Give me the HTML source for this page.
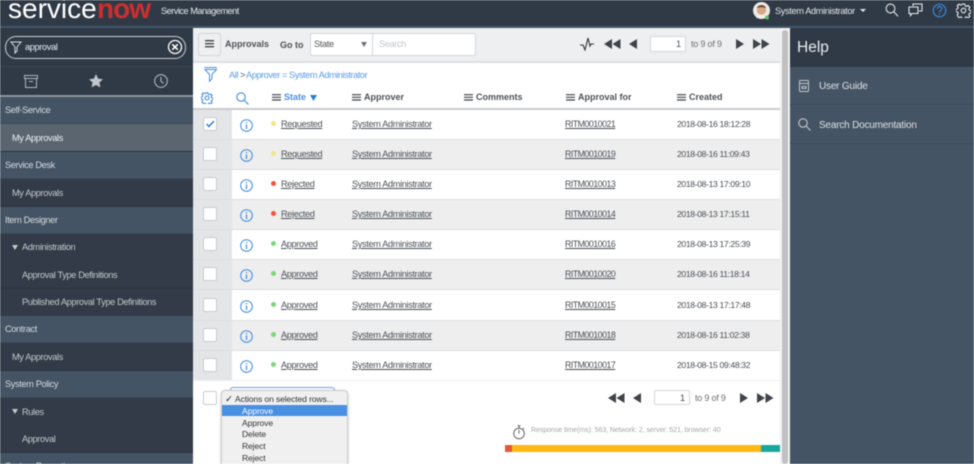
<!DOCTYPE html>
<html><head><meta charset="utf-8">
<style>
html,body{margin:0;padding:0;background:#fff}
#p{position:relative;width:974px;height:464px;overflow:hidden;background:#fff;font-family:"Liberation Sans",sans-serif;font-size:9.2px;letter-spacing:-.35px;color:#4a4f55;filter:blur(.4px)}
#p div,#p svg{position:absolute}
.t{position:absolute;white-space:nowrap;line-height:12px}
.u{text-decoration:underline}
.d{font-size:8.6px}
.r{font-size:8.8px;letter-spacing:-.5px}
.h{background:#455464;left:0;width:193px;height:27px;border-bottom:1px solid #3c4958;box-sizing:border-box}
.s{background:#323b47;left:0;width:193px;height:28px;border-bottom:1px solid #2b333d;box-sizing:border-box}
.n{color:#d5dade}
.g{color:#c3c8cd}
.cb{left:203px;width:12px;height:12px;background:#fff;border:1px solid #c9cbce;border-radius:2px;margin-top:-1px}
.hd{font-weight:bold;font-size:9px;letter-spacing:0;color:#4d5257}
.m{font-size:8.5px;letter-spacing:-.1px;color:#333}
.w{font-size:9px;letter-spacing:-.2px;color:#6a6f75}
.l{color:#dde0e3;font-size:10px;letter-spacing:-.2px}
</style></head><body>
<div id="p">
<!-- top bar -->
<div style="left:0;top:0;width:974px;height:26px;background:#303a46"></div>
<div style="left:0;top:26px;width:974px;height:2px;background:#42566a"></div>
<span class="t" style="left:8px;top:-8px;font-size:28px;line-height:34px;color:#fff;letter-spacing:0">service</span>
<span class="t" style="left:97px;top:-8px;font-size:28px;line-height:34px;color:#cf2e2e;font-weight:bold;letter-spacing:-1px">now</span>
<span class="t" style="left:161px;top:5px;color:#e4e7ea;letter-spacing:-.5px">Service Management</span>
<svg style="left:753px;top:2px" width="18" height="18" viewBox="0 0 18 18"><circle cx="8.5" cy="8.5" r="8.5" fill="#efe9e2"/><circle cx="8.5" cy="8" r="4.6" fill="#d9a586"/><path d="M4 6c1-4 8-4 9 0l-1 0c-2-1-5-1-7 0z" fill="#6b5038"/><path d="M3 16c2-3 9-3 11 0z" fill="#f3f3f3"/><circle cx="14" cy="15.500" r="2" fill="#5cc16a"/></svg>
<span class="t" style="left:775px;top:5px;color:#e4e7ea">System Administrator</span>
<svg style="left:860px;top:9px" width="6" height="4"><path d="M0 0h6L3 3z" fill="#e4e7ea"/></svg>
<svg style="left:885px;top:3px" width="14" height="15" fill="none" stroke="#e4e7ea" stroke-width="1.100"><circle cx="5.500" cy="5.500" r="4.400"/><path d="M8.800 8.800l4.200 4.500"/></svg>
<svg style="left:908px;top:3px" width="16" height="14" fill="none" stroke="#e4e7ea" stroke-width="1.100"><path d="M5 3V1h9v7h-3"/><path d="M1 4h9v6.500H4l-1.500 2v-2H1z" fill="#303a46"/></svg>
<svg style="left:932px;top:3px" width="15" height="15" fill="none"><circle cx="7.500" cy="7.500" r="6.300" stroke="#3c86d8" stroke-width="1.200"/><path d="M5.300 5.800c0-3 4.500-3 4.500-.2 0 1.700-2.200 1.700-2.200 3.500" stroke="#3c86d8" stroke-width="1.200"/><circle cx="7.600" cy="11" r=".8" fill="#3c86d8"/></svg>
<svg style="left:956px;top:3px" width="15" height="15" viewBox="0 0 15 15" fill="none" stroke="#e4e7ea" stroke-width="1.100"><circle cx="7.500" cy="7.500" r="2.300"/><path d="M6.300 1h2.400l.4 1.900 1.300.6 1.700-1 1.700 1.700-1 1.700.6 1.300 1.600.4v2.400l-1.600.4-.6 1.300 1 1.700-1.700 1.500-1.700-1-1.300.6-.4 1.500H6.300l-.4-1.500-1.300-.6-1.700 1L1.200 12l1-1.700-.6-1.300L0 8.600V6.200l1.600-.4.600-1.300-1-1.700 1.700-1.700 1.700 1 1.300-.6z"/></svg>

<!-- sidebar -->
<div style="left:0;top:28px;width:193px;height:436px;background:#303a46"></div>
<div style="left:5px;top:36px;width:179px;height:21px;border:1px solid #c9ced3;border-radius:11px"></div>
<svg style="left:10px;top:41px" width="12" height="13" fill="none" stroke="#d9dde0" stroke-width="1"><path d="M1 1h10L7 6v4l-2 2V6z"/></svg>
<span class="t" style="left:25px;top:41px;color:#e8ebed">approval</span>
<svg style="left:167px;top:39px" width="16" height="16" fill="none" stroke="#fff" stroke-width="1.300"><circle cx="8" cy="8" r="6.500"/><path d="M5.300 5.300l5.400 5.400M10.700 5.300l-5.400 5.400" stroke-width="1.600"/></svg>
<div style="left:0;top:66px;width:193px;height:1px;background:#3a4552"></div>
<svg style="left:24px;top:75px" width="14" height="13" fill="none" stroke="#aeb4ba" stroke-width="1"><path d="M.5.500h13v3H.500zM1.500 3.500v9h11v-9M5 6.500h4"/></svg>
<svg style="left:89px;top:74px" width="14" height="14"><path d="M7 0l2.100 4.600 4.900.6-3.600 3.300 1 4.900L7 11l-4.400 2.400 1-4.900L0 5.200l4.900-.6z" fill="#c0c5ca"/></svg>
<svg style="left:154px;top:74px" width="14" height="14" fill="none" stroke="#aeb4ba" stroke-width="1.100"><circle cx="7" cy="7" r="6.300"/><path d="M7 3v4.300l2.500 2"/></svg>
<div style="left:0;top:95px;width:193px;height:2px;background:#8b939b"></div>

<div class="h" style="top:97px"></div><span class="t n" style="left:5px;top:104px">Self-Service</span>
<div class="s" style="top:124px;background:#5a656f"></div><span class="t n" style="left:12px;top:132px;color:#eef0f2">My Approvals</span>
<div class="h" style="top:152px"></div><span class="t n" style="left:5px;top:159px">Service Desk</span>
<div class="s" style="top:179px"></div><span class="t n g" style="left:12px;top:187px">My Approvals</span>
<div class="h" style="top:207px"></div><span class="t n" style="left:5px;top:214px">Item Designer</span>
<div class="s" style="top:234px"></div><svg style="left:12px;top:245px" width="6" height="5"><path d="M0 0h6L3 5z" fill="#c3c8cd"/></svg><span class="t n g" style="left:22px;top:241px">Administration</span>
<div class="s" style="top:261px"></div><span class="t n g" style="left:22px;top:269px">Approval Type Definitions</span>
<div class="s" style="top:289px"></div><span class="t n g" style="left:22px;top:296px">Published Approval Type Definitions</span>
<div class="h" style="top:316px"></div><span class="t n" style="left:5px;top:323px">Contract</span>
<div class="s" style="top:343px"></div><span class="t n g" style="left:12px;top:351px">My Approvals</span>
<div class="h" style="top:371px"></div><span class="t n" style="left:5px;top:378px">System Policy</span>
<div class="s" style="top:398px"></div><svg style="left:12px;top:409px" width="6" height="5"><path d="M0 0h6L3 5z" fill="#c3c8cd"/></svg><span class="t n g" style="left:22px;top:406px">Rules</span>
<div class="s" style="top:425px"></div><span class="t n g" style="left:22px;top:433px">Approval</span>
<div class="h" style="top:453px"></div><span class="t n" style="left:5px;top:460px">System Properties</span>

<!-- main toolbar -->
<div style="left:193px;top:28px;width:587px;height:33px;background:#eeeff0;border-bottom:2px solid #dcdee0"></div>
<div style="left:198px;top:33px;width:21px;height:21px;background:#eeeff0;border:1px solid #d4d6d8;border-radius:2px"></div>
<svg style="left:205px;top:40px" width="9" height="8"><path d="M0 .7h9M0 3.700h9M0 6.700h9" stroke="#3f444a" stroke-width="1.300"/></svg>
<span class="t hd" style="left:225px;top:38px">Approvals</span>
<span class="t hd" style="left:280px;top:39px">Go to</span>
<div style="left:310px;top:33px;width:164px;height:21px;background:#fff;border:1px solid #d4d6d8;border-radius:2px"></div>
<div style="left:372px;top:34px;width:1px;height:21px;background:#d4d6d8"></div>
<span class="t" style="left:314px;top:38px;color:#555">State</span>
<svg style="left:361px;top:42px" width="6" height="5"><path d="M0 0h6L3 5z" fill="#6b7076"/></svg>
<span class="t" style="left:379px;top:38px;color:#c3c6c9">Search</span>

<svg style="left:580px;top:37px" width="15" height="14" fill="none" stroke="#33383e" stroke-width="1.100"><path d="M0 8h3l2 5 3-12 2 8 1-2h3"/></svg>
<svg style="left:604px;top:39px" width="17" height="10" fill="#3f444a"><path d="M8 0v10L0 5zM16.500 0v10L8.500 5z"/></svg>
<svg style="left:629px;top:39px" width="8" height="10" fill="#3f444a"><path d="M8 0v10L0 5z"/></svg>
<div style="left:650px;top:36px;width:34px;height:14px;background:#fff;border:1px solid #d4d6d8;border-radius:2px"></div>
<span class="t" style="left:676px;top:38px">1</span>
<span class="t w" style="left:691px;top:38px">to 9 of 9</span>
<svg style="left:736px;top:39px" width="8" height="10" fill="#3f444a"><path d="M0 0v10l8-5z"/></svg>
<svg style="left:753px;top:39px" width="17" height="10" fill="#3f444a"><path d="M0 0v10l8-5zM8.500 0v10l8-5z"/></svg>

<!-- breadcrumb -->
<svg style="left:204px;top:67px" width="14" height="15" fill="none" stroke="#4a90e2" stroke-width="1"><path d="M.5.500h12.500M1 2.500h11.500L8 7.500v4l-2.500 3V7.500z"/></svg>
<span class="t" style="left:229px;top:69px;color:#5a9bea">All</span>
<span class="t" style="left:240px;top:69px;color:#555">&gt;</span>
<span class="t" style="left:246px;top:69px;color:#5a9bea;letter-spacing:-.43px">Approver = System Administrator</span>

<!-- header row -->
<svg style="left:201px;top:92px" width="12" height="12" viewBox="0 0 15 15" fill="none" stroke="#3f8ae0" stroke-width="1.300"><circle cx="7.500" cy="7.500" r="2.500"/><path d="M6.300 1h2.400l.4 1.900 1.300.6 1.700-1 1.700 1.700-1 1.700.6 1.300 1.600.4v2.400l-1.600.4-.6 1.300 1 1.700-1.700 1.500-1.700-1-1.300.6-.4 1.500H6.300l-.4-1.500-1.300-.6-1.700 1L1.200 12l1-1.700-.6-1.300L0 8.600V6.200l1.600-.4.600-1.300-1-1.700 1.700-1.700 1.700 1 1.300-.6z"/></svg>
<svg style="left:236px;top:92px" width="13" height="13" fill="none" stroke="#3f8ae0" stroke-width="1.100"><circle cx="5" cy="5" r="4.200"/><path d="M8 8l4.500 4.500"/></svg>
<svg style="left:272px;top:94px" width="9" height="7"><path d="M0 .7h9M0 3.300h9M0 6h9" stroke="#3f444a" stroke-width="1.200"/></svg>
<span class="t hd" style="left:284px;top:91px;color:#4a90e2">State</span>
<svg style="left:310px;top:95px" width="7" height="6"><path d="M0 0h7L3.500 6z" fill="#2b7ad6"/></svg>
<svg style="left:352px;top:94px" width="9" height="7"><path d="M0 .7h9M0 3.300h9M0 6h9" stroke="#3f444a" stroke-width="1.200"/></svg>
<span class="t hd" style="left:364px;top:91px">Approver</span>
<svg style="left:464px;top:94px" width="9" height="7"><path d="M0 .7h9M0 3.300h9M0 6h9" stroke="#3f444a" stroke-width="1.200"/></svg>
<span class="t hd" style="left:476px;top:91px">Comments</span>
<svg style="left:566px;top:94px" width="9" height="7"><path d="M0 .7h9M0 3.300h9M0 6h9" stroke="#3f444a" stroke-width="1.200"/></svg>
<span class="t hd" style="left:578px;top:91px">Approval for</span>
<svg style="left:677px;top:94px" width="9" height="7"><path d="M0 .7h9M0 3.300h9M0 6h9" stroke="#3f444a" stroke-width="1.200"/></svg>
<span class="t hd" style="left:689px;top:91px">Created</span>
<div style="left:193px;top:108px;width:587px;height:2px;background:#c9ccd0"></div>

<!-- rows backgrounds -->
<div style="left:193px;top:139px;width:587px;height:30px;background:#eeeeee"></div>
<div style="left:193px;top:199px;width:587px;height:30px;background:#eeeeee"></div>
<div style="left:193px;top:259px;width:587px;height:30px;background:#eeeeee"></div>
<div style="left:193px;top:320px;width:587px;height:30px;background:#eeeeee"></div>
<div style="left:193px;top:110px;width:39px;height:270px;background:#e4e5e7"></div>
<div style="left:193px;top:139px;width:587px;height:1px;background:#dddfe1"></div>
<div style="left:193px;top:169px;width:587px;height:1px;background:#dddfe1"></div>
<div style="left:193px;top:199px;width:587px;height:1px;background:#dddfe1"></div>
<div style="left:193px;top:229px;width:587px;height:1px;background:#dddfe1"></div>
<div style="left:193px;top:259px;width:587px;height:1px;background:#dddfe1"></div>
<div style="left:193px;top:289px;width:587px;height:1px;background:#dddfe1"></div>
<div style="left:193px;top:320px;width:587px;height:1px;background:#dddfe1"></div>
<div style="left:193px;top:350px;width:587px;height:1px;background:#dddfe1"></div>
<div style="left:193px;top:380px;width:587px;height:1px;background:#eeeeee"></div>

<!-- row 1 -->
<div class="cb" style="top:118px"></div><svg style="left:206px;top:120px" width="9" height="8" fill="none" stroke="#2b7ad6" stroke-width="1.400"><path d="M.5 4l2.500 2.500 5-5.500"/></svg>
<svg style="left:240px;top:119px" width="13" height="13" fill="none" stroke="#3f8ae0"><circle cx="6.500" cy="6.500" r="5.800"/><path d="M6.500 5.500v4.500" stroke-width="1.200"/><path d="M6.500 3v1.300" stroke-width="1.200"/></svg>
<div style="left:271px;top:121px;width:5px;height:5px;border-radius:50%;background:#f3e58a"></div>
<span class="t u" style="left:281px;top:118px">Requested</span><span class="t u" style="left:352px;top:118px">System Administrator</span><span class="t u r" style="left:565px;top:118px">RITM0010021</span><span class="t d" style="left:677px;top:118px">2018-08-16 18:12:28</span>
<!-- row 2 -->
<div class="cb" style="top:148px"></div>
<svg style="left:240px;top:149px" width="13" height="13" fill="none" stroke="#3f8ae0"><circle cx="6.500" cy="6.500" r="5.800"/><path d="M6.500 5.500v4.500" stroke-width="1.200"/><path d="M6.500 3v1.300" stroke-width="1.200"/></svg>
<div style="left:271px;top:151px;width:5px;height:5px;border-radius:50%;background:#f3e58a"></div>
<span class="t u" style="left:281px;top:148px">Requested</span><span class="t u" style="left:352px;top:148px">System Administrator</span><span class="t u r" style="left:565px;top:148px">RITM0010019</span><span class="t d" style="left:677px;top:148px">2018-08-16 11:09:43</span>
<!-- row 3 -->
<div class="cb" style="top:178px"></div>
<svg style="left:240px;top:179px" width="13" height="13" fill="none" stroke="#3f8ae0"><circle cx="6.500" cy="6.500" r="5.800"/><path d="M6.500 5.500v4.500" stroke-width="1.200"/><path d="M6.500 3v1.300" stroke-width="1.200"/></svg>
<div style="left:271px;top:181px;width:5px;height:5px;border-radius:50%;background:#f4553f"></div>
<span class="t u" style="left:281px;top:178px">Rejected</span><span class="t u" style="left:352px;top:178px">System Administrator</span><span class="t u r" style="left:565px;top:178px">RITM0010013</span><span class="t d" style="left:677px;top:178px">2018-08-13 17:09:10</span>
<!-- row 4 -->
<div class="cb" style="top:208px"></div>
<svg style="left:240px;top:209px" width="13" height="13" fill="none" stroke="#3f8ae0"><circle cx="6.500" cy="6.500" r="5.800"/><path d="M6.500 5.500v4.500" stroke-width="1.200"/><path d="M6.500 3v1.300" stroke-width="1.200"/></svg>
<div style="left:271px;top:211px;width:5px;height:5px;border-radius:50%;background:#f4553f"></div>
<span class="t u" style="left:281px;top:208px">Rejected</span><span class="t u" style="left:352px;top:208px">System Administrator</span><span class="t u r" style="left:565px;top:208px">RITM0010014</span><span class="t d" style="left:677px;top:208px">2018-08-13 17:15:11</span>
<!-- row 5 -->
<div class="cb" style="top:238px"></div>
<svg style="left:240px;top:239px" width="13" height="13" fill="none" stroke="#3f8ae0"><circle cx="6.500" cy="6.500" r="5.800"/><path d="M6.500 5.500v4.500" stroke-width="1.200"/><path d="M6.500 3v1.300" stroke-width="1.200"/></svg>
<div style="left:271px;top:241px;width:5px;height:5px;border-radius:50%;background:#7ed67e"></div>
<span class="t u" style="left:281px;top:238px">Approved</span><span class="t u" style="left:352px;top:238px">System Administrator</span><span class="t u r" style="left:565px;top:238px">RITM0010016</span><span class="t d" style="left:677px;top:238px">2018-08-13 17:25:39</span>
<!-- row 6 -->
<div class="cb" style="top:268px"></div>
<svg style="left:240px;top:269px" width="13" height="13" fill="none" stroke="#3f8ae0"><circle cx="6.500" cy="6.500" r="5.800"/><path d="M6.500 5.500v4.500" stroke-width="1.200"/><path d="M6.500 3v1.300" stroke-width="1.200"/></svg>
<div style="left:271px;top:271px;width:5px;height:5px;border-radius:50%;background:#7ed67e"></div>
<span class="t u" style="left:281px;top:268px">Approved</span><span class="t u" style="left:352px;top:268px">System Administrator</span><span class="t u r" style="left:565px;top:268px">RITM0010020</span><span class="t d" style="left:677px;top:268px">2018-08-16 11:18:14</span>
<!-- row 7 -->
<div class="cb" style="top:299px"></div>
<svg style="left:240px;top:300px" width="13" height="13" fill="none" stroke="#3f8ae0"><circle cx="6.500" cy="6.500" r="5.800"/><path d="M6.500 5.500v4.500" stroke-width="1.200"/><path d="M6.500 3v1.300" stroke-width="1.200"/></svg>
<div style="left:271px;top:302px;width:5px;height:5px;border-radius:50%;background:#7ed67e"></div>
<span class="t u" style="left:281px;top:299px">Approved</span><span class="t u" style="left:352px;top:299px">System Administrator</span><span class="t u r" style="left:565px;top:299px">RITM0010015</span><span class="t d" style="left:677px;top:299px">2018-08-13 17:17:48</span>
<!-- row 8 -->
<div class="cb" style="top:329px"></div>
<svg style="left:240px;top:330px" width="13" height="13" fill="none" stroke="#3f8ae0"><circle cx="6.500" cy="6.500" r="5.800"/><path d="M6.500 5.500v4.500" stroke-width="1.200"/><path d="M6.500 3v1.300" stroke-width="1.200"/></svg>
<div style="left:271px;top:332px;width:5px;height:5px;border-radius:50%;background:#7ed67e"></div>
<span class="t u" style="left:281px;top:329px">Approved</span><span class="t u" style="left:352px;top:329px">System Administrator</span><span class="t u r" style="left:565px;top:329px">RITM0010018</span><span class="t d" style="left:677px;top:329px">2018-08-16 11:02:38</span>
<!-- row 9 -->
<div class="cb" style="top:359px"></div>
<svg style="left:240px;top:360px" width="13" height="13" fill="none" stroke="#3f8ae0"><circle cx="6.500" cy="6.500" r="5.800"/><path d="M6.500 5.500v4.500" stroke-width="1.200"/><path d="M6.500 3v1.300" stroke-width="1.200"/></svg>
<div style="left:271px;top:362px;width:5px;height:5px;border-radius:50%;background:#7ed67e"></div>
<span class="t u" style="left:281px;top:359px">Approved</span><span class="t u" style="left:352px;top:359px">System Administrator</span><span class="t u r" style="left:565px;top:359px">RITM0010017</span><span class="t d" style="left:677px;top:359px">2018-08-15 09:48:32</span>

<!-- footer actions -->
<div class="cb" style="top:391px;margin-top:0"></div>
<div style="left:230px;top:387px;width:103px;height:6px;border:1px solid #6aa5e8;border-radius:3px;background:#fff"></div>
<div style="left:221px;top:390px;width:127px;height:80px;background:#f0f0f0;border:1px solid #c9c9c9;border-radius:4px;box-sizing:border-box;box-shadow:0 1px 3px rgba(0,0,0,.2)"></div>
<div style="left:222px;top:405px;width:125px;height:11px;background:#4a90e2"></div>
<span class="t" style="left:225px;top:393px;color:#222;font-size:9.300px;letter-spacing:0">&#10003;</span>
<span class="t m" style="left:235px;top:393px">Actions on selected rows...</span>
<span class="t m" style="left:242px;top:405px;color:#fff">Approve</span>
<span class="t m" style="left:242px;top:417px">Approve</span>
<span class="t m" style="left:242px;top:428px">Delete</span>
<span class="t m" style="left:242px;top:440px">Reject</span>
<span class="t m" style="left:242px;top:452px">Reject</span>

<!-- footer pagination -->
<svg style="left:608px;top:393px" width="17" height="10" fill="#3f444a"><path d="M8 0v10L0 5zM16.500 0v10L8.500 5z"/></svg>
<svg style="left:633px;top:393px" width="8" height="10" fill="#3f444a"><path d="M8 0v10L0 5z"/></svg>
<div style="left:654px;top:390px;width:34px;height:13px;background:#fff;border:1px solid #d4d6d8;border-radius:2px"></div>
<span class="t" style="left:680px;top:392px">1</span>
<span class="t w" style="left:695px;top:392px">to 9 of 9</span>
<svg style="left:740px;top:393px" width="8" height="10" fill="#3f444a"><path d="M0 0v10l8-5z"/></svg>
<svg style="left:757px;top:393px" width="17" height="10" fill="#3f444a"><path d="M0 0v10l8-5zM8.500 0v10l8-5z"/></svg>

<!-- response time -->
<svg style="left:513px;top:425px" width="13" height="15" fill="none" stroke="#666" stroke-width="1"><circle cx="6" cy="8.500" r="5.300"/><path d="M4.500 .8h3M6 1v2M6 5v3.500M10 3l1 1"/></svg>
<span class="t" style="left:531px;top:424px;font-size:7.100px;letter-spacing:-.1px;color:#a5a8ab">Response time(ms): 563, Network: 2, server: 521, browser: 40</span>
<div style="left:505px;top:445px;width:7px;height:7px;background:#e4573d"></div>
<div style="left:512px;top:445px;width:249px;height:7px;background:#fcb813"></div>
<div style="left:761px;top:445px;width:19px;height:7px;background:#16a89f"></div>

<!-- scrollbar -->
<div style="left:780px;top:28px;width:10px;height:436px;background:#f2f2f2"></div>
<div style="left:782px;top:30px;width:6px;height:434px;background:#bfc0c1;border-radius:3px"></div>

<!-- help panel -->
<div style="left:790px;top:28px;width:184px;height:39px;background:#303a46"></div>
<div style="left:790px;top:67px;width:184px;height:397px;background:#455464"></div>
<div style="left:790px;top:104px;width:184px;height:1px;background:#3c4958"></div>
<div style="left:790px;top:143px;width:184px;height:1px;background:#3c4958"></div>
<span class="t" style="left:797px;top:39px;font-size:15.500px;letter-spacing:0;line-height:18px;color:#e9ecee">Help</span>
<svg style="left:799px;top:80px" width="10" height="12" fill="none" stroke="#c3c8cd" stroke-width="1"><rect x=".5" y=".5" width="9" height="11" rx="1"/><path d="M.5 3.500h9M3 6.500h4v2H3z"/></svg>
<span class="t l" style="left:819px;top:81px">User Guide</span>
<svg style="left:798px;top:118px" width="13" height="13" fill="none" stroke="#c3c8cd" stroke-width="1.100"><circle cx="5" cy="5" r="4.200"/><path d="M8 8l4.500 4.500"/></svg>
<span class="t l" style="left:819px;top:120px">Search Documentation</span>
</div>
</body></html>
